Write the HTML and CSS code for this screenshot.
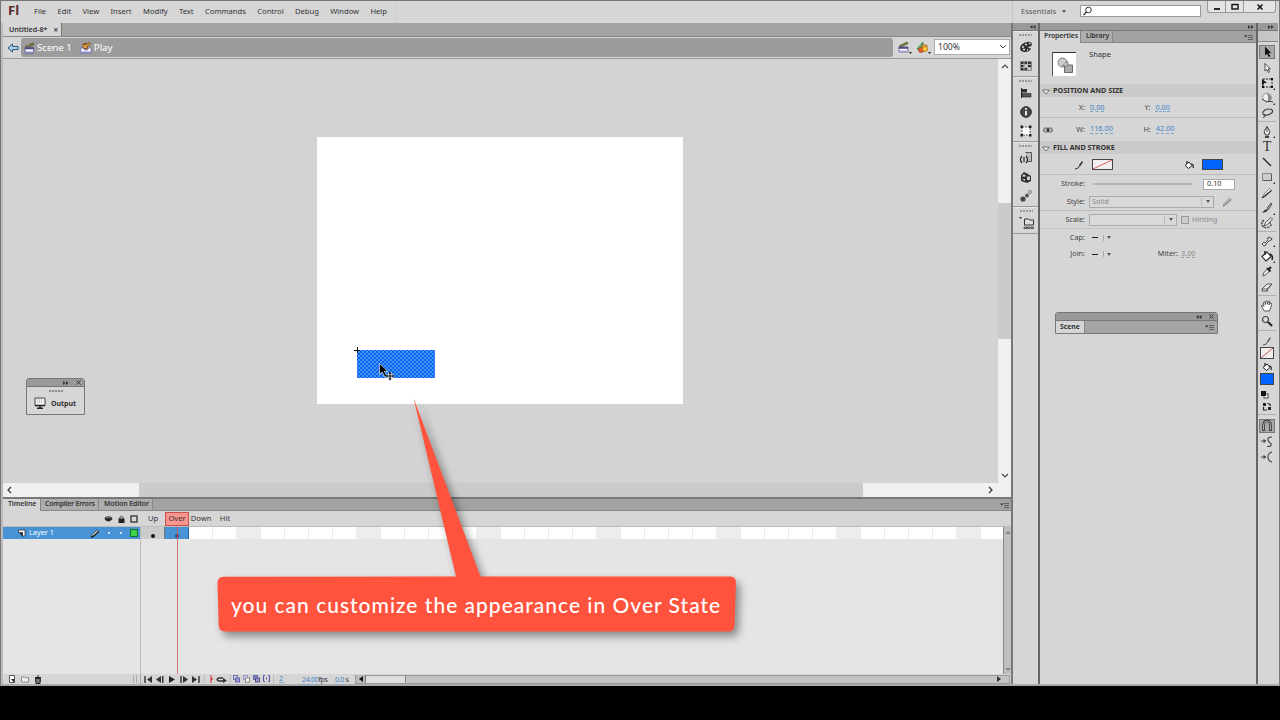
FILE: index.html
```
<!DOCTYPE html>
<html lang="en">
	<head>
		<meta charset="UTF-8" />
		<title>Untitled-8*</title>
		<link rel="stylesheet" href="styles.css">
	</head>

	<body>
		<div class="app">
			<!-- Menu bar -->
			<header class="menubar">
				<div class="logo">Fl</div>
				<nav class="menu">
					<span>File</span><span>Edit</span><span>View</span><span>Insert</span><span>Modify</span><span>Text</span><span>Commands</span><span>Control</span><span>Debug</span><span>Window</span><span>Help</span>
				</nav>
				<div class="workspace">Essentials <i class="caret"></i></div>
				<div class="search">
					<svg width="12" height="10" viewBox="0 0 12 10" fill="none" stroke="#333"><circle cx="6.5" cy="4" r="2.8"/><path d="M4.5 6 1.5 9" stroke-width="1.4"/></svg>
				</div>
				<div class="winbuttons">
					<span><svg width="8" height="8"><path d="M1 6h6" stroke="#111" stroke-width="1.8"/></svg></span>
					<span><svg width="8" height="8"><rect x="1" y="1.5" width="6" height="4.5" fill="none" stroke="#111" stroke-width="1.4"/></svg></span>
					<span class="close"><svg width="8" height="8"><path d="M1.5 1.5 6.5 6.5M6.5 1.5 1.5 6.5" stroke="#111" stroke-width="1.5"/></svg></span>
				</div>
			</header>

			<div class="main">
				<!-- Document and timeline -->
				<section class="left">
					<div class="doctabs"><div class="doctab">Untitled-8* <span class="x">×</span></div></div>

					<div class="editbar">
						<svg class="back" width="12" height="10" viewBox="0 0 12 10"><path d="M1 5 5.5 1v2.4H11v3.2H5.5V9Z" fill="#a9d4ef" stroke="#27567c"/></svg>
						<div class="crumbs">
							<svg width="11" height="12" viewBox="0 0 11 12"><path d="M1 5 9 1l1 1.5L3 6Z" fill="#8f8743" stroke="#4a4524" stroke-width=".7"/><path d="M1 5.5h8.5V11H1Z" fill="#fff" stroke="#555288" stroke-width=".8"/><path d="M1 5.5h8.5v1.8H1Z" fill="#4f4c85"/><path d="M1 9.5h8.5V11H1Z" fill="#8d8bc8"/></svg>
							<span>Scene 1</span>
							<svg class="second" width="12" height="12" viewBox="0 0 12 12"><path d="M.8 6h2.7l1 2h3l1-2h2.700v5.200H.8Z" fill="#fff" stroke="#6a67a0" stroke-width=".8"/><path d="M1 9.500h10v1.600H1Z" fill="#8d8bc8"/><path d="M3 5.500V2.500L4.500 1v2L6 .8V3L8 .8h2v2L7.500 4v2.500H4Z" fill="#d99b3c" stroke="#6d3a12" stroke-width=".7"/></svg>
							<span>Play</span>
						</div>
						<svg class="sceneicon" width="14" height="13" viewBox="0 0 14 13"><path d="M1 5 9 1l1 1.5L3 6Z" fill="#8f8743" stroke="#4a4524" stroke-width=".7"/><path d="M1 6h9v5H1Z" fill="#fff" stroke="#555288" stroke-width=".8"/><path d="M1 6h9v1.8H1Z" fill="#4f4c85"/><path d="M1 9.5h9V11H1Z" fill="#aaa8dc"/><path d="M11 11h3l-1.5 2Z" fill="#222"/></svg>
						<svg class="symbolicon" width="15" height="13" viewBox="0 0 15 13"><path d="M1 8 7 1v8Z" fill="#5db46b" stroke="#28713a" stroke-width=".7"/><path d="M6 4h5v6H6Z" fill="#f1ae35" stroke="#a35c16" stroke-width=".7"/><circle cx="5" cy="9" r="2.5" fill="#e55b2c" stroke="#96320f" stroke-width=".6"/><path d="m9 5 3 3-3 3-3-3Z" fill="#f5cb3c" stroke="#9c6912" stroke-width=".6"/><path d="M12 11h3l-1.5 2Z" fill="#222"/></svg>
						<div class="zoombox">100%<svg width="8" height="6" viewBox="0 0 8 6"><path d="m1 1 3 3 3-3" fill="none" stroke="#555"/></svg></div>
					</div>

					<div class="workrow">
						<div class="pasteboard">
							<div class="stage">
								<div class="button-shape"></div>
								<svg class="regpoint" width="7" height="7"><path d="M3.5 0v6M0 3.5h6" stroke="#111" stroke-width="1"/></svg>
								<svg class="cursor" width="16" height="19" viewBox="0 0 16 19"><path d="M.5.5v10.8l2.6-2.2 2.7 4.7 2-1-2.5-4.6h3.4Z" fill="#000" stroke="#fff" stroke-width=".6"/><path d="M11 9v8M7 13h8" stroke="#fff" stroke-width="3"/><path d="M11 10v6M8 13h6" stroke="#000"/><path d="m11 8.500 1.600 2H9.400ZM11 17.500l1.600-2H9.400ZM6.500 13l2-1.600v3.200ZM15.500 13l-2-1.600v3.200Z" fill="#000"/></svg>
							</div>
						</div>
						<div class="vscroll">
							<svg width="8" height="6"><path d="m1 5 3-3 3 3" fill="none" stroke="#444" stroke-width="1.2"/></svg>
							<div class="thumb"></div>
							<svg width="8" height="6"><path d="m1 1 3 3 3-3" fill="none" stroke="#444" stroke-width="1.2"/></svg>
						</div>
					</div>
					<div class="hscroll">
						<svg width="6" height="8"><path d="M5 1 2 4l3 3" fill="none" stroke="#333" stroke-width="1.2"/></svg>
						<div class="thumb"></div>
						<svg width="6" height="8"><path d="m1 1 3 3-3 3" fill="none" stroke="#333" stroke-width="1.2"/></svg>
					</div>

					<div class="timeline">
						<div class="tltabs">
							<span class="active">Timeline</span><span class="ce">Compiler Errors</span><span class="me">Motion Editor</span>
							<svg class="panelmenu" width="10" height="6"><path d="M0 1.5h3.5L1.8 3.5Z" fill="#333"/><path d="M4 1.5h5M4 3.5h5M4 5.5h5" stroke="#444" stroke-width=".7"/></svg>
						</div>
						<div class="ruler">
							<div class="layerhead">
								<svg width="9" height="8" viewBox="0 0 9 8"><path d="M.5 3.5C2 .5 7 .5 8.5 3.5 7 7 2 7.5.5 3.5Z" fill="#222"/><path d="M2 3.5C3 2 6 2 7 3.5" stroke="#bbb" stroke-width=".7" fill="none"/></svg>
								<svg width="7" height="8" viewBox="0 0 7 8"><path d="M.5 3.5h6V8h-6Z" fill="#222"/><path d="M1.8 4V2.5q1.7-2.5 3.4 0V4" stroke="#333" fill="none"/></svg>
								<svg width="8" height="8"><rect x="1" y="1" width="6" height="6" fill="none" stroke="#222" stroke-width="1.2"/></svg>
							</div>
							<span class="state">Up</span><span class="state over">Over</span><span class="state">Down</span><span class="state">Hit</span>
						</div>
						<div class="tlbody">
							<div class="layers">
								<div class="layer">
									<svg width="8" height="8" viewBox="0 0 8 8"><path d="M.5 1H7v6H4.5V3.5h-4Z" fill="#fff" stroke="#333" stroke-width=".8"/><path d="m1.5 4 3 3.500v-3.500Z" fill="#222"/></svg>
									<span class="name">Layer 1</span>
									<svg class="pencil" width="10" height="9" viewBox="0 0 10 9"><path d="m1.500 7.500.8-2L7 1l1.500 1.300L4 7Z" fill="#ddd" stroke="#333" stroke-width=".7"/><path d="m1 8.500 3-1.700L8.700 2.500" fill="none" stroke="#111" stroke-width="1.200"/></svg>
									<i class="dot"></i><i class="dot"></i><i class="outline"></i>
								</div>
							</div>
							<div class="frames">
								<div class="framerow">
									<div class="frame key"></div><div class="frame key current"></div>
								</div>
								<div class="playhead"></div>
							</div>
							<div class="tlscroll">
								<svg width="6" height="4"><path d="M3 0 6 3H0Z" fill="#888"/></svg>
								<svg width="6" height="4"><path d="M0 0h6L3 3Z" fill="#888"/></svg>
							</div>
						</div>
						<div class="tlfoot">
							<div class="layertools">
								<svg width="8" height="8" viewBox="0 0 8 8"><path d="M1.5.5h5v7h-5Z" fill="#fff" stroke="#555"/><path d="M3 4h3v3.5Z" fill="#222"/></svg>
								<svg width="8" height="8" viewBox="0 0 8 8"><path d="M.5 2h3l1 .6h3V7h-7Z" fill="#eee" stroke="#777" stroke-width=".8"/></svg>
								<svg width="8" height="9" viewBox="0 0 8 9"><path d="M1.5 3.5h5L6 8.5H2Z" fill="#777" stroke="#222"/><path d="M1 2.5h6M3 1h2" stroke="#222" stroke-width="1.2"/></svg>
								<i class="grip"></i>
							</div>
							<div class="playback">
								<svg width="8" height="7"><path d="M1 0v7" stroke="#222" stroke-width="1.3"/><path d="M8 0v7L3 3.5Z" fill="#333"/></svg>
								<svg width="8" height="7"><path d="M5 0v7L0 3.5Z" fill="#333"/><path d="M6.8 0v7" stroke="#222" stroke-width="1.3"/></svg>
								<svg width="8" height="7"><path d="M1 0v7l6-3.5Z" fill="#222"/></svg>
								<svg width="8" height="7"><path d="M1 0v7" stroke="#222" stroke-width="1.3"/><path d="M3 0v7l5-3.5Z" fill="#333"/></svg>
								<svg width="8" height="7"><path d="M0 0v7l5-3.5Z" fill="#333"/><path d="M7 0v7" stroke="#222" stroke-width="1.3"/></svg>
							</div>
							<div class="loop">
								<svg width="4" height="8"><path d="M2 0v8" stroke="#d33"/><path d="m2 2 2 2-2 2Z" fill="#d33"/></svg>
								<svg width="11" height="7"><path d="M7 2H3q-4 1.5 0 3h6" fill="none" stroke="#333" stroke-width="1.4"/><path d="m7 2 4 2.5L7 7Z" fill="#333"/></svg>
							</div>
							<div class="onion">
								<svg width="7" height="8"><rect x=".5" y=".5" width="4" height="4" fill="#cce" stroke="#77a"/><rect x="2.5" y="3" width="4" height="4" fill="#99c" stroke="#66a"/></svg>
								<svg width="7" height="8"><rect x=".5" y=".5" width="4" height="4" fill="#cce" stroke="#99b"/><rect x="2.5" y="3" width="4" height="4" fill="#fff" stroke="#888"/></svg>
								<svg width="7" height="8"><rect x=".5" y=".5" width="4" height="4" fill="#88b" stroke="#66a"/><rect x="2.5" y="3" width="4" height="4" fill="#99c" stroke="#558"/></svg>
								<svg width="7" height="8"><path d="M2 .5H.5v6H2M5 .5h1.5v6H5M3.5 2.5v2" fill="none" stroke="#55a"/></svg>
							</div>
							<span class="val num">2</span>
							<span class="fps"><span class="val">24.00</span>fps</span>
							<span class="secs"><span class="val">0.0</span> s</span>
							<div class="tlh">
								<span class="btn"><svg width="4" height="6"><path d="M4 0v6L0 3Z" fill="#111"/></svg></span>
								<span class="thumb"></span>
								<svg class="right" width="4" height="6"><path d="M0 0v6l4-3Z" fill="#333"/></svg>
							</div>
						</div>
					</div>
				</section>

				<!-- Collapsed panel icons -->
				<aside class="dock">
					<div class="collapse"><svg width="6" height="4"><path d="M2.5 0v4L0 2ZM5.5 0v4L3 2Z" fill="#333"/></svg></div>
					<div class="dockgroup g1">
						<svg width="14" height="14" viewBox="0 0 14 14"><path d="M1 8q1-5 7-6 5-1 5 3-1 2-4 2 1 2 3 1-1 4-6 4-5 0-5-4Z" fill="#333"/><path d="M3 7h2M6 4.5h2M4 9.5h2M10 3.5h1.5M8 10h1" stroke="#ddd" stroke-width="1.4"/></svg>
						<svg width="14" height="14" viewBox="0 0 14 14"><path d="M1.5 2.5h11v9h-11Z" fill="#333"/><path d="M2 5.5h10M2 8.5h10M5 3v8M8.5 3v8" stroke="#ccc" stroke-width=".8"/><path d="M5.5 6h3v2h-3ZM9 9h3v2H9Z" fill="#ccc"/></svg>
					</div>
					<div class="dockgroup g2">
						<svg width="14" height="14" viewBox="0 0 14 14"><path d="M2.5 2v10" stroke="#222"/><path d="M3 3h5v3.5H3Z" fill="#333"/><path d="M3 7.5h9V11H3Z" fill="#555" stroke="#222" stroke-width=".6"/></svg>
						<svg width="14" height="14" viewBox="0 0 14 14"><circle cx="7" cy="7" r="5.3" fill="#444" stroke="#222"/><path d="M7 6v4.5M7 3v1.7" stroke="#fff" stroke-width="1.7"/></svg>
						<svg width="14" height="14" viewBox="0 0 14 14"><path d="M3 3h8v8H3Z" fill="#fff" stroke="#333" stroke-width=".8" stroke-dasharray="2 1"/><path d="M1.5 1.5H4V4H1.5ZM10 1.5h2.5V4H10ZM1.5 10H4v2.5H1.5ZM10 10h2.5v2.5H10Z" fill="#222"/></svg>
					</div>
					<div class="dockgroup g3">
						<svg width="14" height="14" viewBox="0 0 14 14"><path d="M6.5 1.5h6v9h-4" fill="#bbb" stroke="#555"/><path d="M3 5Q0 8.500 3 12M7 5q3 3.500 0 7M5 6v5" fill="none" stroke="#222" stroke-width="1.2"/></svg>
						<svg width="14" height="14" viewBox="0 0 14 14"><path d="m2 5 3-3 4 2 3 2v5l-4 2-6-2Z" fill="#333"/><path d="m3 6 2-2 2 2-2 1ZM8 6.5h3V10H8ZM3 9h3v2Z" fill="#ccc"/></svg>
						<svg width="14" height="14" viewBox="0 0 14 14"><circle cx="4" cy="10" r="2.6" fill="#444"/><circle cx="8" cy="6.5" r="1.9" fill="#555"/><circle cx="11" cy="3" r="1.5" fill="#eee" stroke="#555" stroke-width=".8"/></svg>
					</div>
					<div class="dockgroup g4">
						<svg width="16" height="14" viewBox="0 0 16 14"><path d="M0 1h3L1.5 3Z" fill="#333"/><path d="M5.5 3h4l1 1h4v5h-9Z" fill="#ddd" stroke="#333"/><path d="M5 11h2.5v1.5H5ZM8.5 11H11v1.5H8.5ZM12 11h2.5v1.5H12Z" fill="none" stroke="#333" stroke-width=".8"/></svg>
					</div>
				</aside>

				<!-- Properties panel -->
				<aside class="props">
					<div class="collapse"><svg width="6" height="4"><path d="M0 0v4l2.5-2ZM3 0v4l2.5-2Z" fill="#333"/></svg></div>
					<div class="ptabs"><span class="active">Properties</span><span class="lib">Library</span><svg class="panelmenu" width="10" height="6"><path d="M0 1.5h3.5L1.8 3.5Z" fill="#333"/><path d="M4 1.5h5M4 3.5h5M4 5.5h5" stroke="#444" stroke-width=".7"/></svg></div>
					<div class="kind">
						<div class="kindicon"><svg width="17" height="17" viewBox="0 0 17 17"><circle cx="5.5" cy="5.5" r="4.5" fill="#ccc" stroke="#777"/><path d="M7.5 8h8v7.5h-8Z" fill="#aaa" stroke="#666"/><path d="M8 5h3v4H6V7" fill="#bbb" stroke="#777" stroke-width=".7"/></svg></div>
						<span>Shape</span>
					</div>
					<h2><svg width="8" height="6"><path d="M.5 1h7L4 5Z" fill="#eee" stroke="#555" stroke-width=".8"/></svg>POSITION AND SIZE</h2>
					<div class="row xy"><label>X:</label><span class="val">0.00</span><label class="second">Y:</label><span class="val">0.00</span></div>
					<div class="row wh">
						<svg class="link" width="10" height="6" viewBox="0 0 10 6"><rect x=".7" y="1" width="5" height="4" rx="2" fill="none" stroke="#444"/><rect x="4.3" y="1" width="5" height="4" rx="2" fill="none" stroke="#444"/><path d="M3 3h4" stroke="#333"/></svg>
						<label>W:</label><span class="val">116.00</span><label class="second">H:</label><span class="val">42.00</span>
					</div>
					<h2><svg width="8" height="6"><path d="M.5 1h7L4 5Z" fill="#eee" stroke="#555" stroke-width=".8"/></svg>FILL AND STROKE</h2>
					<div class="row paint">
						<svg class="pen" width="10" height="10" viewBox="0 0 10 10"><path d="M1 9q4 0 5-4" fill="none" stroke="#333"/><path d="m5 5 3-4 1 1-2.5 4Z" fill="#333"/></svg>
						<span class="swatch none"><svg width="19" height="9"><path d="M0 9 19 0" stroke="#e06060"/></svg></span>
						<svg class="bucket" width="10" height="10" viewBox="0 0 10 10"><path d="M1 5.5 5 2l3 3.5-3.5 3Z" fill="#fff" stroke="#222"/><path d="M3 1v3M7 4q3 0 2 4" fill="none" stroke="#222" stroke-width="1.2"/></svg>
						<span class="swatch blue"></span>
					</div>
					<div class="row stroke"><label>Stroke:</label><span class="slider"></span><span class="field">0.10</span></div>
					<div class="row style"><label>Style:</label><span class="select">Solid<i><b class="caret"></b></i></span><svg width="10" height="10" viewBox="0 0 10 10"><path d="m1 9 1-2.5L7.5 1 9 2.5 3.5 8Z" fill="#bbb" stroke="#999" stroke-width=".8"/><path d="M1 9.500 9.300 2.500" stroke="#777"/></svg></div>
					<div class="row scale"><label>Scale:</label><span class="select"><i><b class="caret"></b></i></span><span class="check"></span><span class="muted">Hinting</span></div>
					<div class="row cap"><label>Cap:</label><i class="dash"></i><i class="bar"></i><b class="caret"></b></div>
					<div class="row join"><label>Join:</label><i class="dash"></i><i class="bar"></i><b class="caret"></b><label class="miter">Miter:</label><span class="val off">3.00</span></div>
				</aside>

				<!-- Tools -->
				<aside class="tools">
					<div class="collapse"><svg width="6" height="4"><path d="M0 0v4l2.5-2ZM3 0v4l2.5-2Z" fill="#333"/></svg></div>
					<div class="toolcap"></div>
					<div class="toolgroup t1">
						<span class="on"><svg viewBox="0 0 14 14"><path d="M5 1.5v9l2-1.8 1.8 3.3 1.5-.8-1.7-3.2h2.6Z" fill="#111"/></svg></span>
						<span><svg viewBox="0 0 14 14"><path d="M5 2.5V10l1.7-1.5 1.6 3 1.2-.7L8 8h2.2Z" fill="#fff" stroke="#222" stroke-width=".8"/></svg></span>
						<span class="more"><svg viewBox="0 0 14 14"><path d="M3 3h9v8H3Z" fill="none" stroke="#222" stroke-dasharray="2 1"/><path d="m2 3 5 4H4.5L2 9.500Z" fill="#111"/><path d="M11 2h2v2h-2ZM11 10h2v2h-2ZM2 10h2v2H2Z" fill="#111"/></svg></span>
						<span class="more"><svg viewBox="0 0 14 14"><circle cx="7" cy="6.500" r="4.300" fill="#eee" stroke="#888" stroke-width=".8"/><path d="M6 2q4 4 1 9 4 0 4.500-4.500Q10 3 6 2Z" fill="#888"/><path d="M2 8q4 4 9 2.500l2 .5" fill="none" stroke="#444"/></svg></span>
						<span><svg viewBox="0 0 14 14"><path d="M3 11.5q3-1 1-2.5-3-2 1-5 4-2 7 0 2 2-2 4-3 2-6 .5" fill="none" stroke="#444" stroke-width="1.2"/></svg></span>
					</div>
					<div class="toolgroup t2">
						<span class="more"><svg viewBox="0 0 14 14"><path d="m7 1.5 2.8 5L8.500 10h-3L4.200 6.500Z" fill="#eee" stroke="#333"/><path d="M5 11h4v2H5Z" fill="#444"/><path d="M7 2v5" stroke="#333" stroke-width=".8"/></svg></span>
						<span><b class="tee">T</b></span>
						<span><svg viewBox="0 0 14 14"><path d="m3 3 8 8" stroke="#222" stroke-width="1.2"/></svg></span>
						<span class="more"><svg viewBox="0 0 14 14"><path d="M2.5 3.5h9v7h-9Z" fill="#ccc" stroke="#888"/><path d="M3 10.5h8.500V4" fill="none" stroke="#555"/></svg></span>
						<span><svg viewBox="0 0 14 14"><path d="m2.5 11.5 1.5-3.500L9.500 2.500l2 2L6 10Z" fill="#eee" stroke="#666" stroke-width=".7"/><path d="M2 12 11.500 4.500" stroke="#333" stroke-width="1.2"/></svg></span>
						<span class="more"><svg viewBox="0 0 14 14"><path d="m7 7 4-5 1 1-3.500 5.500Z" fill="#aaa" stroke="#333" stroke-width=".8"/><path d="M2 11.500q4-4.500 6-3-1 3.500-6 3Z" fill="#333"/></svg></span>
						<span><svg viewBox="0 0 14 14"><path d="M9 6q4 3 0 5-5 2-7-2-1-4 3-5" fill="none" stroke="#333" stroke-width="1.300" stroke-dasharray="2 1"/><path d="m4 10 1.500-3.500L11 1.500 12.500 3 7.500 8.500Z" fill="#eee" stroke="#333" stroke-width=".8"/></svg></span>
					</div>
					<div class="toolgroup t3">
						<span class="more"><svg viewBox="0 0 14 14"><path d="M2 10q1-2 3-1l3-3q-1-3 1-3l1 1 2 .5q0 2-2.500 2L6 10q0 2-2 2Z" fill="#eee" stroke="#333" stroke-width=".9"/></svg></span>
						<span class="more"><svg viewBox="0 0 14 14"><path d="m2 7.500 5-4.500 4 4.500L6 12Z" fill="#fff" stroke="#222" stroke-width="1.100"/><path d="M5 2v4M9.500 5q4 1 2.500 6" fill="none" stroke="#222" stroke-width="1.500"/></svg></span>
						<span><svg viewBox="0 0 14 14"><path d="m3 11 1-2.500L7.500 5l2 2L6 10.500 3 12Z" fill="#eee" stroke="#444" stroke-width=".9"/><path d="m7 4 3.500 3.500M8.500 5.500 11 3" stroke="#222" stroke-width="2"/></svg></span>
						<span><svg viewBox="0 0 14 14"><path d="m2 9 5-5h5L7.500 9.500V11H2Z" fill="#eee" stroke="#444" stroke-width=".9"/><path d="M2 9h5l5-5M7 9v2" fill="none" stroke="#444" stroke-width=".8"/></svg></span>
					</div>
					<div class="toolgroup t4">
						<span><svg viewBox="0 0 14 14"><path d="M4.500 12Q2 9 1.500 6.500q1-1 2.500 1L3.500 3.500q1-1 1.500 0l.7 2V2.200q1-1 1.500 0l.3 3 1-3q1-.5 1.300.3L9 6l1.500-2q1.500 0 1 1.500Q11 9 9.500 12Z" fill="#fff" stroke="#444" stroke-width=".9"/></svg></span>
						<span><svg viewBox="0 0 14 14"><circle cx="5.5" cy="5.5" r="3" fill="#ddd" stroke="#444" stroke-width="1.2"/><path d="m8 8 4 4" stroke="#222" stroke-width="2"/></svg></span>
					</div>
					<div class="toolgroup t5">
						<svg class="pen" width="10" height="10" viewBox="0 0 10 10"><path d="M1 9q4 0 5-4" fill="none" stroke="#555"/><path d="m5 5 3-4 1 1-2.5 4Z" fill="#666"/></svg>
						<span class="swatch none"><svg width="12" height="10"><path d="M0 10 12 0" stroke="#d05050"/></svg></span>
						<svg class="bucket" width="10" height="10" viewBox="0 0 10 10"><path d="M1 5.5 5 2l3 3.5-3.5 3Z" fill="#fff" stroke="#222"/><path d="M3 1v3M7 4q3 0 2 4" fill="none" stroke="#222" stroke-width="1.2"/></svg>
						<span class="swatch blue"></span>
						<svg class="bw" width="8" height="8"><rect x="3" y="3" width="4" height="4" fill="#fff" stroke="#444"/><rect width="5" height="5" fill="#111"/></svg>
						<svg class="swap" width="10" height="9"><path d="M1 1h3v3H1ZM6 5h3v3H6Z" fill="#222"/><path d="M5.5 1.5q3 0 3 2.5M1.5 5v3H5" fill="none" stroke="#222" stroke-width="1.2"/></svg>
					</div>
					<div class="toolgroup t6">
						<span class="on"><svg viewBox="0 0 14 14"><path d="M3.5 12V6q0-4 3.5-4t3.5 4v6" fill="none" stroke="#333" stroke-width="2.6"/><path d="M3.5 11V6q0-4 3.5-4t3.5 4v5" fill="none" stroke="#aaa" stroke-width="1"/></svg></span>
						<span><svg viewBox="0 0 14 14"><path d="M1 6h4M3.5 4.5 5.5 6l-2 1.5M12 2Q7 2 8 5t3 3.500q1 3.500-4 3" fill="none" stroke="#444" stroke-width="1.1"/></svg></span>
						<span><svg viewBox="0 0 14 14"><path d="M1 7h4M3.5 5.5 5.5 7l-2 1.5M12 2Q8 3 8 7t4 5" fill="none" stroke="#444" stroke-width="1.1"/></svg></span>
					</div>
				</aside>
			</div>

			<!-- Floating panels -->
			<div class="float output">
				<div class="floatbar"><svg width="6" height="4"><path d="M0 0v4l2.5-2ZM3 0v4l2.5-2Z" fill="#333"/></svg><svg width="5" height="5"><path d="m.5.5 4 4M4.500.5l-4 4" stroke="#333"/></svg></div>
				<i class="grip"></i>
				<div class="floatbody">
					<svg width="12" height="12" viewBox="0 0 12 12"><path d="M1 1h10v7.5H1Z" fill="#f4f4f4" stroke="#444"/><path d="M1 8.5h10M6 9v2M3 11.2h6" stroke="#222" stroke-width="1.5"/><path d="M3 3h6M3 5h6" stroke="#999" stroke-dasharray="1 1"/></svg>
					<span>Output</span>
				</div>
			</div>
			<div class="float scene">
				<div class="floatbar"><svg width="6" height="4"><path d="M2.5 0v4L0 2ZM5.5 0v4L3 2Z" fill="#333"/></svg><svg width="5" height="5"><path d="m.5.5 4 4M4.500.5l-4 4" stroke="#333"/></svg></div>
				<div class="floattabs"><span>Scene</span><svg class="panelmenu" width="10" height="6"><path d="M0 1.5h3.5L1.8 3.5Z" fill="#333"/><path d="M4 1.5h5M4 3.5h5M4 5.5h5" stroke="#444" stroke-width=".7"/></svg></div>
			</div>

			<!-- Callout -->
			<div class="callout">
				<svg width="540" height="250" viewBox="0 0 540 250">
					<path d="M203.5 8 270.5 186.500 520 186.500q6 0 6 6l-1.500 43q-.3 6-6 6L15 241.500q-6-.2-6.300-6L7.500 193q0-6 6-6.300l232.500-.2Z" fill="#ff533d"/>
				</svg>
				<span>you can customize the appearance in Over State</span>
			</div>
		</div>
	</body>
</html>
```
FILE: styles.css
```
* {
	box-sizing: border-box;
}

body {
	margin: 0;
	width: 1280px;
	height: 720px;
	background: #000;
	overflow: hidden;
	font-family: "Noto Sans", "Open Sans", sans-serif;
	font-size: 7.5px;
	line-height: 1;
	color: #333;
}

svg {
	display: block;
	flex: none;
}

.app {
	position: relative;
	display: flex;
	flex-direction: column;
	width: 1280px;
	height: 686px;
	background: #d6d6d6;
	border-left: 1px solid #777;
	border-right: 1px solid #777;
	border-top: 1px solid #777;
	border-bottom: 2px solid #aaa;
}

.caret {
	display: inline-block;
	border: 2.5px solid transparent;
	border-top: 3.5px solid #555;
	border-bottom: 0;
}

.grip {
	height: 2px;
	width: 14px;
	background: repeating-linear-gradient(90deg, #888 0 2px, transparent 2px 3px);
}

.val {
	color: #3f82c6;
	border-bottom: 1px dashed #7ba6d0;
}

.panelmenu {
	margin-left: auto;
}

/* Menu bar */
.menubar {
	display: flex;
	height: 22px;
}

.logo {
	width: 33px;
	padding: 3px 0 0 7px;
	font: bold 13px/1 "Open Sans", sans-serif;
	color: #582b2b;
}

.menu {
	display: flex;
	gap: 11.4px;
	width: 363px;
	padding-top: 7px;
	font-size: 7.6px;
	border-right: 1px solid #ccc;
	white-space: nowrap;
}

.workspace {
	width: 66px;
	margin-left: 615px;
	padding: 7px 0 0 8px;
	font-size: 7.6px;
	color: #555;
	border-left: 1px solid #c4c4c4;
	white-space: nowrap;
}

.workspace .caret {
	margin: 0 0 1px 4px;
	border-width: 3px 2px 0;
}

.search {
	width: 121px;
	height: 12px;
	margin: 4px 0 0 2px;
	padding: 0 1px;
	background: #fff;
	border: 1px solid #999;
}

.winbuttons {
	display: flex;
	width: 69px;
	height: 12px;
	margin-left: 6px;
	border: 1px solid #999;
	border-top: 0;
	border-radius: 0 0 3px 3px;
	background: #e4e4e4;
}

.winbuttons span {
	display: flex;
	align-items: center;
	justify-content: center;
	width: 18px;
	border-right: 1px solid #999;
}

.winbuttons .close {
	width: 31px;
	border: 0;
}

.main {
	display: flex;
	flex: 1;
	min-height: 0;
}

.collapse {
	display: flex;
	justify-content: flex-end;
	align-items: center;
	height: 8px;
	padding-right: 4px;
	background: #999;
	border-bottom: 1px solid #777;
}

/* Document */
.left {
	display: flex;
	flex-direction: column;
	width: 1012px;
	border-left: 2px solid #bbb;
	border-right: 2px solid #777;
}

.doctabs {
	height: 14px;
	background: #a4a4a4;
	border-bottom: 1px solid #888;
}

.doctab {
	display: flex;
	align-items: center;
	width: 59px;
	height: 13px;
	padding-left: 6px;
	background: #d6d6d6;
	border-right: 1px solid #777;
	font-size: 7.1px;
	font-weight: 600;
	white-space: nowrap;
}

.doctab .x {
	margin-left: 6px;
	font-size: 8px;
}

.editbar {
	display: flex;
	align-items: center;
	height: 22px;
	padding-left: 4px;
	border-bottom: 1px solid #999;
}

.crumbs {
	display: flex;
	align-items: center;
	width: 872px;
	height: 19px;
	margin-left: 2px;
	padding-left: 3px;
	border-radius: 3px;
	background: #9c9c9c;
	color: #fff;
	font-size: 9.8px;
	letter-spacing: -.08px;
}

.crumbs span {
	margin-left: 2px;
}

.crumbs .second {
	margin-left: 8px;
}

.sceneicon {
	margin-left: 5px;
}

.symbolicon {
	margin-left: 4px;
}

.zoombox {
	display: flex;
	align-items: center;
	justify-content: space-between;
	width: 76px;
	height: 16px;
	margin: -1px 0 0 3px;
	padding: 0 2px 0 3px;
	background: #fff;
	border: 1px solid #aaa;
	font-size: 8.6px;
}

.workrow {
	display: flex;
	height: 424px;
	background: #d3d3d3;
}

.pasteboard {
	display: flex;
	align-items: center;
	justify-content: center;
	width: 995px;
}

.stage {
	position: relative;
	width: 366px;
	height: 267px;
	margin: 0 1px 1px 0;
	background: #fff;
}

.button-shape {
	position: absolute;
	left: 40px;
	top: 213px;
	width: 78px;
	height: 28px;
	background-color: #0663ee;
	background-image: radial-gradient(circle, #78b6fa .5px, transparent 1px), radial-gradient(circle, #78b6fa .5px, transparent 1px);
	background-size: 4px 4px;
	background-position: 0 0, 2px 2px;
}

.regpoint {
	position: absolute;
	left: 37px;
	top: 210px;
}

.cursor {
	position: absolute;
	left: 62px;
	top: 226px;
}

.vscroll {
	display: flex;
	flex-direction: column;
	align-items: center;
	justify-content: space-between;
	width: 13px;
	padding: 4px 0;
	background: #f0f0f0;
}

.vscroll .thumb {
	width: 13px;
	height: 136px;
	margin-top: 0;
	background: #cbcbcb;
}

.hscroll {
	display: flex;
	align-items: center;
	justify-content: space-between;
	height: 14px;
	padding: 0 17px 0 3px;
	background: #f0f0f0;
}

.hscroll .thumb {
	width: 724px;
	height: 14px;
	margin-left: 2px;
	background: #cbcbcb;
}

/* Timeline */
.timeline {
	display: flex;
	flex-direction: column;
	flex: 1;
	min-height: 0;
	border-top: 2px solid #777;
}

.tltabs,
.ptabs {
	display: flex;
	height: 12px;
	background: #a2a2a2;
	border-bottom: 1px solid #888;
	font-size: 6.9px;
	font-weight: 600;
	white-space: nowrap;
}

.tltabs > span,
.ptabs > span {
	padding: 2px 0 0 5px;
	background: #adadad;
	border-right: 1px solid #888;
	letter-spacing: -.08px;
}

.tltabs > .active,
.ptabs > .active {
	width: 38px;
	height: 12px;
	background: #d6d6d6;
}

.tltabs .ce {
	width: 58px;
	padding-left: 4px;
	letter-spacing: -.2px;
}

.tltabs .me {
	width: 54px;
}

.tltabs .panelmenu {
	margin: 3px 1px 0 auto;
}

.ruler {
	display: flex;
	align-items: center;
	height: 15px;
	font-size: 7.6px;
}

.layerhead {
	display: flex;
	align-items: center;
	justify-content: flex-end;
	gap: 5px;
	width: 138px;
	padding-right: 3px;
}

.state {
	display: flex;
	align-items: center;
	justify-content: center;
	width: 24px;
	height: 14px;
}

.state.over {
	background: #fa948e;
	border: 1px solid #c8514c;
}

.tlbody {
	display: flex;
	flex: 1;
	background: #e5e5e5;
	border-top: 1px solid #bbb;
}

.layers {
	width: 138px;
	border-right: 1px solid #bbb;
}

.layer {
	display: flex;
	align-items: center;
	height: 12px;
	padding-left: 15px;
	background: #4793d6;
	color: #fff;
	font-size: 7.3px;
}

.layer .name {
	width: 64px;
	padding: 0 0 1px 3px;
}

.dot {
	width: 2px;
	height: 2px;
	margin-left: 10px;
	border-radius: 50%;
	background: #fff;
}

.pencil + .dot {
	margin-left: 8px;
}

.outline {
	width: 8px;
	height: 8px;
	margin-left: 8px;
	background: #3ed048;
	border: 1px solid #176f24;
}

.frames {
	position: relative;
	width: 862px;
}

/* a frame is 24px wide, every fifth one is tinted */
.framerow {
	display: flex;
	height: 12px;
	background-image: repeating-linear-gradient(90deg, transparent 0 23px, #ececec 23px 24px), repeating-linear-gradient(90deg, #fff 0 96px, #ededed 96px 120px);
}

.frame {
	display: flex;
	align-items: flex-end;
	justify-content: center;
	width: 24px;
	padding-bottom: 1px;
	background: #ccc;
	border-right: 1px solid #777;
}

.frame.current {
	background: #4793d6;
	border-right-color: #26649d;
}

.frame.key::after {
	content: "";
	width: 4px;
	height: 4px;
	border-radius: 50%;
	background: #111;
}

.frame.current::after {
	background: #414168;
}

.playhead {
	position: absolute;
	left: 36px;
	top: 0;
	width: 1px;
	height: 100%;
	background: rgba(205, 80, 80, .75);
}

.tlscroll {
	display: flex;
	flex-direction: column;
	align-items: center;
	justify-content: space-between;
	width: 8px;
	padding: 4px 0 2px;
	background: #bfbfbf;
	border-left: 1px solid #888;
}

.tlfoot {
	display: flex;
	align-items: center;
	height: 10px;
	font-size: 7px;
	white-space: nowrap;
}

.layertools {
	display: flex;
	align-items: center;
	gap: 5px;
	width: 138px;
	height: 10px;
	padding-left: 5px;
	border-right: 1px solid #aaa;
}

.layertools .grip {
	width: 4px;
	height: 8px;
	margin: 0 3px 0 auto;
	background: repeating-linear-gradient(90deg, #aaa 0 1px, transparent 1px 3px);
}

.playback {
	display: flex;
	gap: 4px;
	width: 64px;
	padding-left: 3px;
	border-right: 1px solid #bbb;
}

.loop {
	display: flex;
	align-items: center;
	gap: 3px;
	width: 26px;
	padding-left: 4px;
	border-right: 1px solid #bbb;
}

.onion {
	display: flex;
	gap: 3px;
	width: 43px;
	padding-left: 2px;
	border-right: 1px solid #bbb;
}

.num {
	width: 5px;
	margin-left: 5px;
}

.fps {
	width: 33px;
	margin-left: 18px;
}

.fps,
.secs {
	letter-spacing: -.3px;
}

.secs {
	width: 20px;
}

.tlh {
	display: flex;
	align-items: center;
	width: 655px;
	height: 9px;
	background: #c3c3c3;
	border: 1px solid #999;
}

.tlh .btn {
	display: flex;
	align-items: center;
	justify-content: center;
	width: 10px;
	height: 8px;
	border-right: 1px solid #777;
	background: #bbb;
}

.tlh .thumb {
	width: 40px;
	height: 7px;
	background: #dedede;
	border-right: 1px solid #888;
}

.tlh .right {
	margin: 0 8px 0 auto;
}

/* Collapsed dock */
.dock {
	width: 27px;
	border-right: 2px solid #666;
}

.dock .collapse {
	padding-right: 2px;
}

.dockgroup {
	display: flex;
	flex-direction: column;
	align-items: center;
	gap: 5px;
	border-bottom: 1px solid #999;
	border-top: 1px solid #e8e8e8;
}

.dockgroup::before {
	content: "";
	width: 13px;
	height: 2px;
	margin: 2px 0 -1px;
	background: repeating-linear-gradient(90deg, #999 0 2px, transparent 2px 3px);
}

.g1 {
	height: 46px;
}

.g2,
.g3 {
	height: 65px;
}

.g4 {
	height: 27px;
	padding-left: 2px;
}

/* Properties panel */
.props {
	width: 218px;
	border-right: 2px solid #666;
}

.props .collapse {
	padding-right: 2px;
}

.ptabs > .active {
	width: 41px;
	padding-left: 4px;
}

.ptabs .lib {
	width: 32px;
}

.ptabs .panelmenu {
	margin: 3px 2px 0 auto;
}

.kind {
	display: flex;
	height: 41px;
	padding: 9px 0 0 12px;
	font-size: 7.6px;
}

.kindicon {
	width: 24px;
	height: 24px;
	margin-right: 13px;
	padding: 4px;
	background: #fff;
	border-top: 1px solid #333;
	border-left: 1px solid #555;
}

.kind span {
	margin-top: -1px;
}

.props h2 {
	display: flex;
	align-items: center;
	gap: 3px;
	height: 13px;
	margin: 0;
	padding-left: 2px;
	background: #cacaca;
	font-size: 7.2px;
	font-weight: bold;
	white-space: nowrap;
}

.props h2 svg {
	margin-top: 3px;
}

.row {
	display: flex;
	align-items: center;
	font-size: 7.3px;
	white-space: nowrap;
}

.row label {
	width: 45px;
	margin-right: 5px;
	text-align: right;
	color: #444;
}

.xy {
	height: 21px;
	padding-top: 2px;
	border-bottom: 1px solid #bbb;
}

.wh {
	height: 23px;
}

.wh .link {
	margin: 0 -13px 0 3px;
}

.xy .second {
	width: 46px;
}

.wh .second {
	width: 38px;
}

.paint {
	height: 21px;
	padding-top: 1px;
	border-bottom: 1px solid #bbb;
}

.paint .pen {
	margin: 0 8px 0 34px;
}

.paint .bucket {
	margin: 0 8px 0 71px;
}

.swatch {
	width: 21px;
	height: 11px;
	border: 1px solid #444;
}

.swatch.none {
	background: #f0eeee;
}

.swatch.blue {
	background: #0062ff;
}

.stroke {
	height: 18px;
}

.stroke label,
.style label,
.scale label,
.cap label,
.join > label:first-child {
	margin-right: 4px;
}

.slider {
	width: 99px;
	height: 2px;
	margin-left: 4px;
	background: #b5b5b5;
}

.field {
	width: 32px;
	height: 11px;
	margin-left: 11px;
	padding: 0 0 0 3px;
	background: #fff;
	border: 1px solid #aaa;
}

.style {
	height: 18px;
	border-bottom: 1px solid #bbb;
}

.select {
	display: flex;
	align-items: center;
	justify-content: space-between;
	width: 125px;
	height: 12px;
	padding-left: 2px;
	border: 1px solid #aaa;
	background: #d9d9d9;
	color: #888;
}

.select i {
	display: flex;
	align-items: center;
	justify-content: center;
	width: 12px;
	height: 8px;
	margin-left: auto;
	border-left: 1px solid #bbb;
}

.style svg {
	margin-left: 8px;
}

.scale {
	height: 18px;
	border-bottom: 1px solid #c4c4c4;
}

.scale .select {
	width: 88px;
}

.check {
	width: 8px;
	height: 8px;
	margin: 0 3px 0 4px;
	border: 1px solid #999;
	background: #ccc;
}

.muted {
	color: #888;
}

.cap {
	height: 17px;
}

.join {
	height: 16px;
}

.dash {
	width: 6px;
	height: 1px;
	margin-left: 3px;
	background: #222;
}

.bar {
	width: 1px;
	height: 6px;
	margin: 0 3px 0 5px;
	background: #aaa;
}

.row .miter {
	margin: 0 3px 0 22px;
}

.off {
	color: #888;
	border-color: #999;
}

/* Tools */
.tools {
	width: 20px;
}

.tools .collapse {
	padding-right: 4px;
}

.toolcap {
	height: 11px;
	background: #c6c6c6;
	border-bottom: 1px solid #888;
}

.toolgroup {
	display: flex;
	flex-direction: column;
	align-items: center;
	width: 18px;
	border-bottom: 1px solid #b0b0b0;
}

.toolgroup > span:not(.swatch) {
	position: relative;
	display: flex;
	align-items: center;
	justify-content: center;
	width: 16px;
	height: 15.3px;
}

.toolgroup > span:not(.swatch) svg {
	width: 14px;
	height: 14px;
}

.toolgroup > .on:not(.swatch) {
	height: 14px;
	margin-bottom: 1.300px;
	background: #a8a8a8;
	border: 1px solid #777;
}

.more::after {
	content: "";
	position: absolute;
	right: 0;
	bottom: 1px;
	border: 1.5px solid transparent;
	border-right-color: #222;
	border-bottom-color: #222;
}

.tee {
	font: 14px/1 "Liberation Serif", serif;
}

.t1 {
	height: 80px;
	padding-top: 3px;
}

.t2 {
	height: 110px;
	padding-top: 2px;
}

.t3 {
	height: 64px;
	padding-top: 1px;
}

.t4 {
	height: 35px;
	padding-top: 2px;
}

.t5 {
	height: 84px;
	padding-top: 5px;
}

.t5 .swatch {
	width: 14px;
	height: 12px;
	margin: 1px 0 3px;
}

.t5 .bw {
	margin: 3px 4px 3px 0;
}

.t6 {
	padding-top: 4px;
	border: 0;
}

/* Floating panels */
.float {
	position: absolute;
	background: #d6d6d6;
	border: 1px solid #777;
	border-radius: 3px 3px 0 0;
	font-size: 6.8px;
	font-weight: bold;
}

.floatbar {
	display: flex;
	align-items: center;
	justify-content: flex-end;
	gap: 7px;
	height: 8px;
	padding-right: 3px;
	background: #999;
	border-bottom: 1px solid #777;
}

.output {
	left: 25px;
	top: 377px;
	width: 59px;
	height: 37px;
}

.output .grip {
	display: block;
	margin: 3px auto 0;
}

.floatbody {
	display: flex;
	align-items: center;
	gap: 5px;
	padding: 5px 0 0 7px;
	font-size: 7px;
}

.scene {
	left: 1054px;
	top: 311px;
	width: 163px;
	height: 22px;
}

.floattabs {
	display: flex;
	height: 12px;
	background: #a5a5a5;
}

.floattabs span {
	width: 29px;
	padding: 3px 0 0 4px;
	background: #d6d6d6;
	border-right: 1px solid #888;
}

.floattabs .panelmenu {
	margin: 3px 2px 0 auto;
}

/* Callout */
.callout {
	position: absolute;
	left: 209px;
	top: 389px;
	width: 540px;
	height: 250px;
	color: #fff;
}

.callout svg {
	filter: drop-shadow(4px 5px 4px rgba(0, 0, 0, .4));
}

.callout span {
	position: absolute;
	left: 21px;
	top: 204px;
	font: 500 21px/1 Lato, sans-serif;
	letter-spacing: 1px;
	white-space: nowrap;
}
```
